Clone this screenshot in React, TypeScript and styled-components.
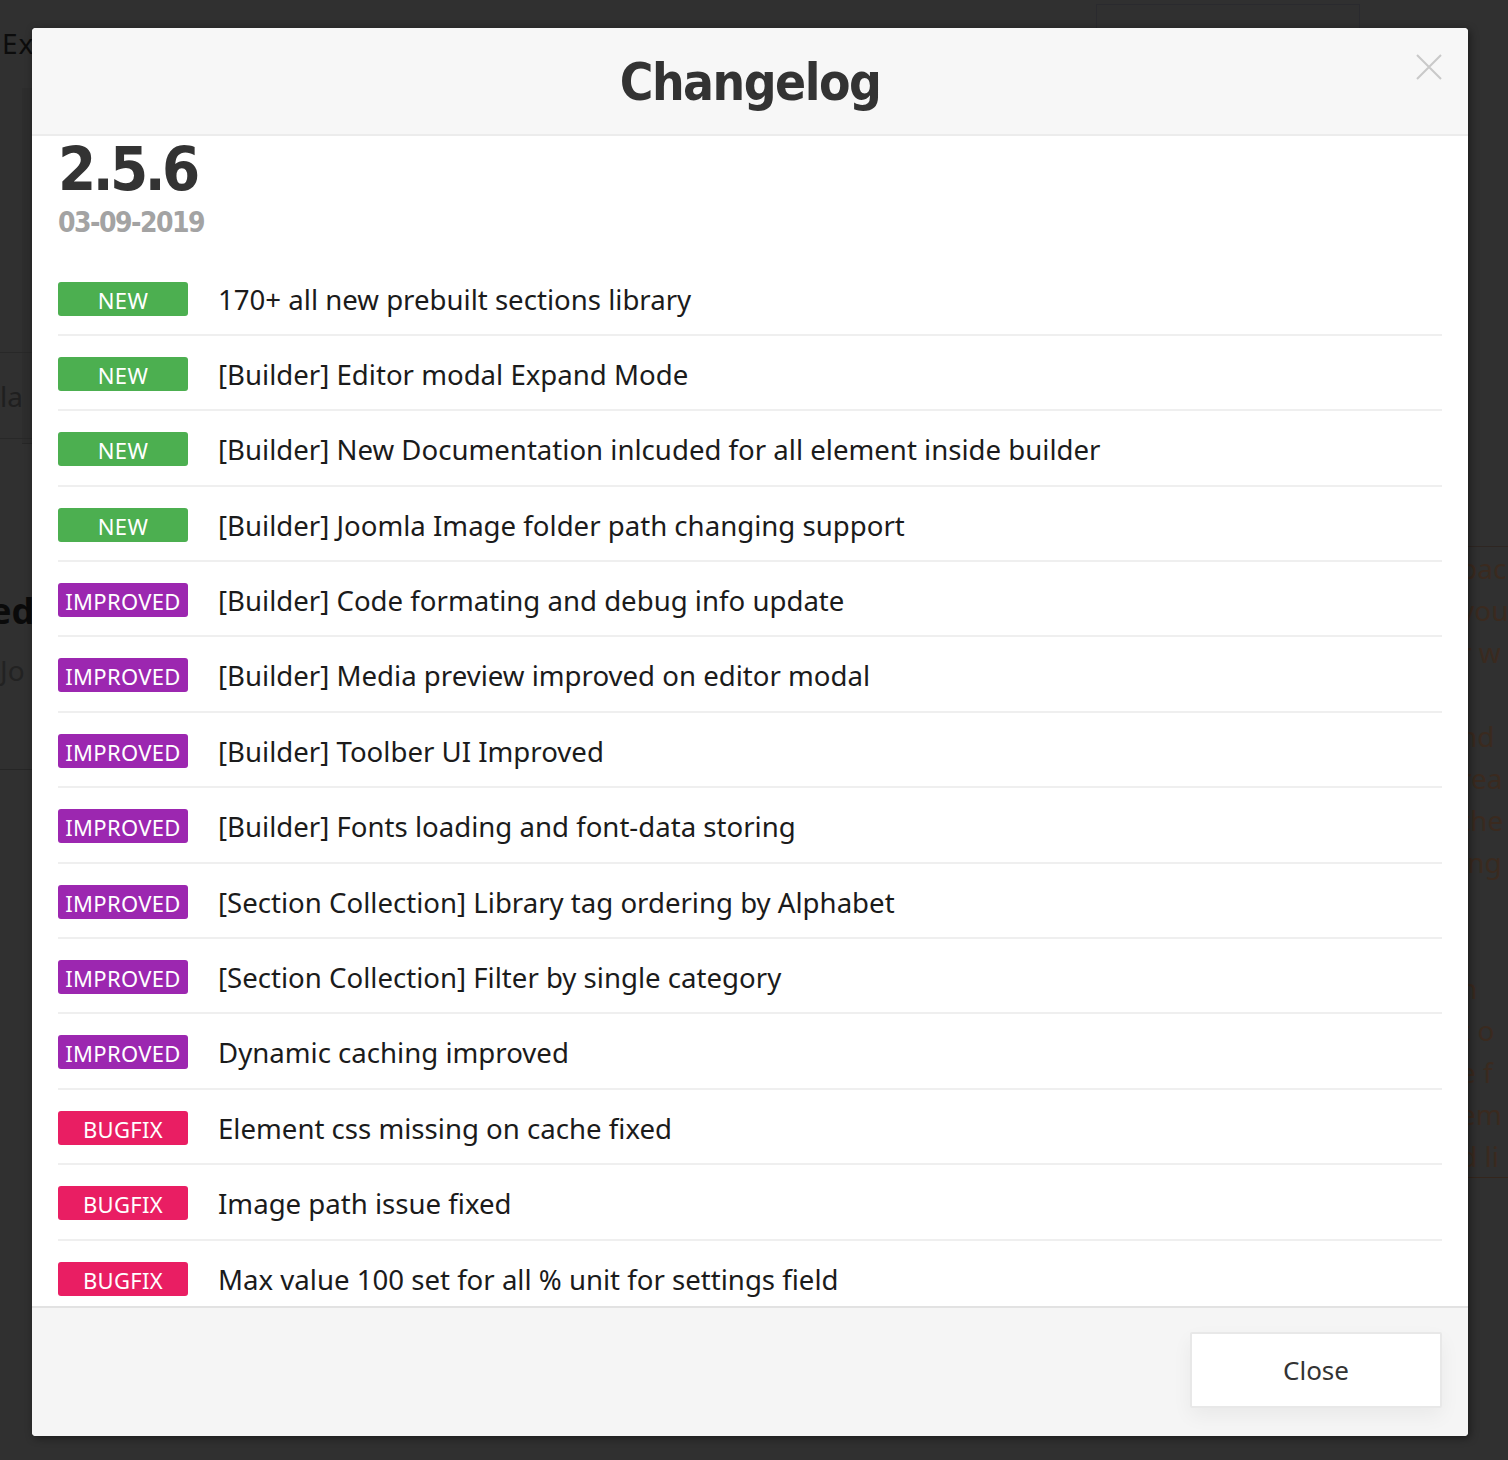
import styled, { createGlobalStyle } from "styled-components";

type Kind = "new" | "improved" | "bugfix";

const entries: { kind: Kind; text: string }[] = [
    { kind: "new", text: "170+ all new prebuilt sections library" },
    { kind: "new", text: "[Builder] Editor modal Expand Mode" },
    { kind: "new", text: "[Builder] New Documentation inlcuded for all element inside builder" },
    { kind: "new", text: "[Builder] Joomla Image folder path changing support" },
    { kind: "improved", text: "[Builder] Code formating and debug info update" },
    { kind: "improved", text: "[Builder] Media preview improved on editor modal" },
    { kind: "improved", text: "[Builder] Toolber UI Improved" },
    { kind: "improved", text: "[Builder] Fonts loading and font-data storing" },
    { kind: "improved", text: "[Section Collection] Library tag ordering by Alphabet" },
    { kind: "improved", text: "[Section Collection] Filter by single category" },
    { kind: "improved", text: "Dynamic caching improved" },
    { kind: "bugfix", text: "Element css missing on cache fixed" },
    { kind: "bugfix", text: "Image path issue fixed" },
    { kind: "bugfix", text: "Max value 100 set for all % unit for settings field" },
    { kind: "bugfix", text: "Addon list scroll issue fixed" },
];

const badgeColors: Record<Kind, string> = {
    new: "#4caf50",
    improved: "#9c27b0",
    bugfix: "#e91e63",
};

const rightLines = ["pack", "you", "r w", "", "nd", "rea", "the", "ing", "", "", "n", "t o", "e f", "em", "d li"];

const App = () => {
    return (
        <>
            <GlobalStyle />
            <Page>
                <LeftSide>
                    <PageTitle>Explore</PageTitle>
                    <GhostPanel>
                        <GhostRow>la</GhostRow>
                        <GhostRow />
                    </GhostPanel>
                    <GhostHeading>ed</GhostHeading>
                    <GhostMuted>Jo</GhostMuted>
                </LeftSide>
                <RightSide>
                    <GhostCard />
                    <BrownText>
                        {rightLines.map((line, i) => (
                            <BrownLine key={i}>{line}</BrownLine>
                        ))}
                    </BrownText>
                </RightSide>
            </Page>
            <Overlay>
                <Modal>
                    <Header>
                        <Title>Changelog</Title>
                        <CloseIcon aria-label="close">
                            <svg width="26" height="26" viewBox="0 0 26 26">
                                <path d="M1 1 L25 25 M25 1 L1 25" stroke="#c9c9c9" strokeWidth="2" fill="none" />
                            </svg>
                        </CloseIcon>
                    </Header>
                    <Body>
                        <Version>2.5.6</Version>
                        <ReleaseDate>03-09-2019</ReleaseDate>
                        <List>
                            {entries.map((e, i) => (
                                <Row key={i}>
                                    <Badge $kind={e.kind}>{e.kind.toUpperCase()}</Badge>
                                    <RowText>{e.text}</RowText>
                                </Row>
                            ))}
                        </List>
                    </Body>
                    <Footer>
                        <CloseButton>Close</CloseButton>
                    </Footer>
                </Modal>
            </Overlay>
        </>
    );
};

const GlobalStyle = createGlobalStyle`
    html, body {
        margin: 0;
        padding: 0;
        background: #303030;
    }
    body {
        font-family: "Noto Sans", "Open Sans", sans-serif;
        width: 1508px;
        height: 1460px;
        overflow: hidden;
    }
    * { box-sizing: border-box; }
`;

const Page = styled.div`
    position: relative;
    width: 1508px;
    height: 1460px;
    background: #303030;
    display: flex;
    justify-content: space-between;
    overflow: hidden;
`;

const LeftSide = styled.div`
    width: 400px;
    padding-top: 24px;
    display: flex;
    flex-direction: column;
`;

const PageTitle = styled.div`
    font-size: 28px;
    color: #0c0c0c;
    padding-left: 2px;
    letter-spacing: 1px;
`;

const GhostPanel = styled.div`
    margin: 26px 0 0 22px;
    background: #2d2d2d;
    border-bottom: 1px solid #262626;
    height: 356px;
    padding-top: 264px;
`;

const GhostRow = styled.div`
    margin-left: -22px;
    height: 86px;
    border-top: 1px solid #282828;
    font-size: 28px;
    line-height: 86px;
    color: #1f1f1f;
`;

const GhostHeading = styled.div`
    margin-top: 142px;
    margin-left: -10px;
    font-size: 36px;
    font-weight: 700;
    color: #0a0a0a;
`;

const GhostMuted = styled.div`
    margin-top: 16px;
    font-size: 28px;
    color: #222;
    border-bottom: 1px solid #262626;
    padding-bottom: 80px;
`;

const RightSide = styled.div`
    width: 420px;
    display: flex;
    flex-direction: column;
    align-items: flex-end;
`;

const GhostCard = styled.div`
    width: 264px;
    height: 80px;
    margin: 4px 148px 0 0;
    border: 1px solid #2a2a2e;
    border-bottom: none;
`;

const BrownText = styled.div`
    margin-top: 462px;
    width: 48px;
    align-self: flex-end;
    border-top: 1px solid #2e2622;
    border-bottom: 1px solid #34261c;
`;

const BrownLine = styled.div`
    height: 42px;
    font-size: 28px;
    line-height: 42px;
    color: #3a2a1f;
    white-space: nowrap;
    overflow: hidden;
`;

const Overlay = styled.div`
    position: absolute;
    inset: 0;
    padding: 28px 40px 24px 32px;
`;

const Modal = styled.div`
    width: 1436px;
    height: 1408px;
    background: #fff;
    border-radius: 4px;
    overflow: hidden;
    display: flex;
    flex-direction: column;
    box-shadow: 2px 2px 8px rgba(0, 0, 0, 0.45);
`;

const Header = styled.div`
    position: relative;
    flex: 0 0 108px;
    background: #f7f7f7;
    border-bottom: 2px solid #ececec;
    display: flex;
    align-items: center;
    justify-content: center;
`;

const condensed = `"Liberation Sans Narrow", "DejaVu Sans Condensed", "Roboto", sans-serif`;

const Title = styled.h1`
    margin: 0;
    font-family: ${condensed};
    font-weight: 700;
    font-size: 51px;
    letter-spacing: -1.5px;
    color: #333;
    padding-top: 2px;
`;

const CloseIcon = styled.div`
    position: absolute;
    top: 26px;
    right: 26px;
    width: 26px;
    height: 26px;
    display: flex;
    cursor: pointer;
`;

const Body = styled.div`
    flex: 1;
    overflow: hidden;
    padding: 0 26px;
`;

const Version = styled.div`
    font-family: ${condensed};
    font-weight: 700;
    font-size: 61px;
    letter-spacing: -3.5px;
    line-height: 64px;
    color: #333;
    margin-top: 1px;
`;

const ReleaseDate = styled.div`
    font-family: ${condensed};
    font-weight: 700;
    font-size: 28px;
    letter-spacing: -1.5px;
    line-height: 40px;
    color: #a3a3a3;
    margin-top: 2px;
`;

const List = styled.div`
    margin-top: 17.5px;
    display: flex;
    flex-direction: column;
`;

const Row = styled.div`
    display: flex;
    align-items: center;
    gap: 30px;
    padding: 21px 0 18.4px;
    border-bottom: 2px solid #efefef;
`;

const Badge = styled.span<{ $kind: Kind }>`
    flex: 0 0 130px;
    height: 34px;
    border-radius: 3px;
    background: ${(p) => badgeColors[p.$kind]};
    color: #fff;
    font-size: 22px;
    line-height: 36px;
    text-align: center;
    letter-spacing: 0.3px;
`;

const RowText = styled.span`
    font-size: 27.6px;
    line-height: 34px;
    color: #1b1b1b;
`;

const Footer = styled.div`
    flex: 0 0 130px;
    background: #f5f5f5;
    border-top: 2px solid #e2e2e2;
    display: flex;
    justify-content: flex-end;
    align-items: flex-start;
    padding: 24px 26px 0 0;
`;

const CloseButton = styled.button`
    width: 252px;
    height: 76px;
    background: #fff;
    border: 2px solid #e8e8e8;
    border-radius: 2px;
    font-family: "Noto Sans", "Open Sans", sans-serif;
    font-size: 26px;
    color: #333;
    box-shadow: 0 8px 20px rgba(0, 0, 0, 0.05);
    cursor: pointer;
`;

export default App;
